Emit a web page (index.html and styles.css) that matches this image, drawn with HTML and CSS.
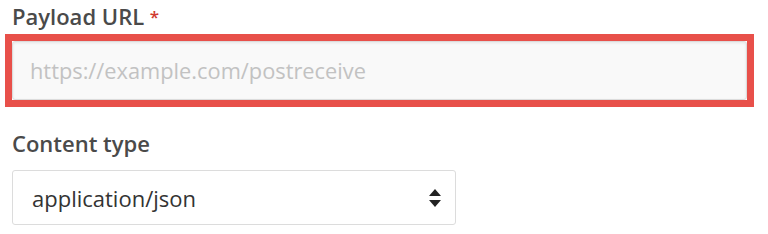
FILE: index.html
```html
<!DOCTYPE html>
<html>
<head>
    <meta charset="utf-8">
    <title>Webhook form</title>
    <link rel="stylesheet" href="styles.css">
</head>
<body>

<div class="hookForm">
    <div class="formGroup">
        <label class="fieldLabel" for="payloadUrl">Payload URL <span class="required">*</span></label>
        <div class="highlight">
            <input type="text" id="payloadUrl" class="formControl urlInput" placeholder="https://example.com/postreceive">
        </div>
    </div>

    <div class="formGroup contentGroup">
        <label class="fieldLabel" for="contentType">Content type</label>
        <div class="selectWrap">
            <select id="contentType" class="formControl typeSelect">
                <option value="json">application/json</option>
                <option value="form">application/x-www-form-urlencoded</option>
            </select>
            <svg class="selectArrows" width="14" height="20" viewBox="0 0 14 20">
                <path d="M7 1 L13 8 L1 8 Z" fill="#222"/>
                <path d="M7 19 L13 12 L1 12 Z" fill="#222"/>
            </svg>
        </div>
    </div>
</div>

</body>
</html>
```

FILE: styles.css
```css
body {
    margin: 0;
    font-family: "Open Sans", "Noto Sans", sans-serif;
    background-color: #fff;
}

.hookForm {
    padding: 2px 0 0 12px;
}

.fieldLabel {
    display: block;
    font-size: 22px;
    font-weight: 600;
    line-height: 28px;
    color: #4a4a4a;
}

.required {
    color: #d0392f;
    font-size: 17px;
    vertical-align: 2px;
}

.highlight {
    margin: 3px 0 0 -7px;
    width: 735px;
    border: 7px solid #e8504a;
}

.formControl {
    box-sizing: border-box;
    font-family: inherit;
    border: 1px solid #dcdcdc;
    border-radius: 3px;
    outline: none;
}

.urlInput {
    display: block;
    width: 100%;
    height: 59px;
    padding: 0 17px;
    font-size: 21.8px;
    color: #333;
    background-color: #f9f9f9;
    box-shadow: inset 0 1px 3px rgba(0, 0, 0, 0.08);
}

.urlInput::placeholder {
    color: #c2c2c2;
}

.contentGroup {
    margin-top: 22px;
}

.selectWrap {
    position: relative;
    margin-top: 13px;
    width: 444px;
}

.typeSelect {
    display: block;
    width: 100%;
    height: 55px;
    padding: 0 40px 0 19px;
    font-size: 22px;
    color: #333;
    background-color: #fff;
    -webkit-appearance: none;
    appearance: none;
}

.selectArrows {
    position: absolute;
    right: 14px;
    top: 18px;
    pointer-events: none;
}
```
